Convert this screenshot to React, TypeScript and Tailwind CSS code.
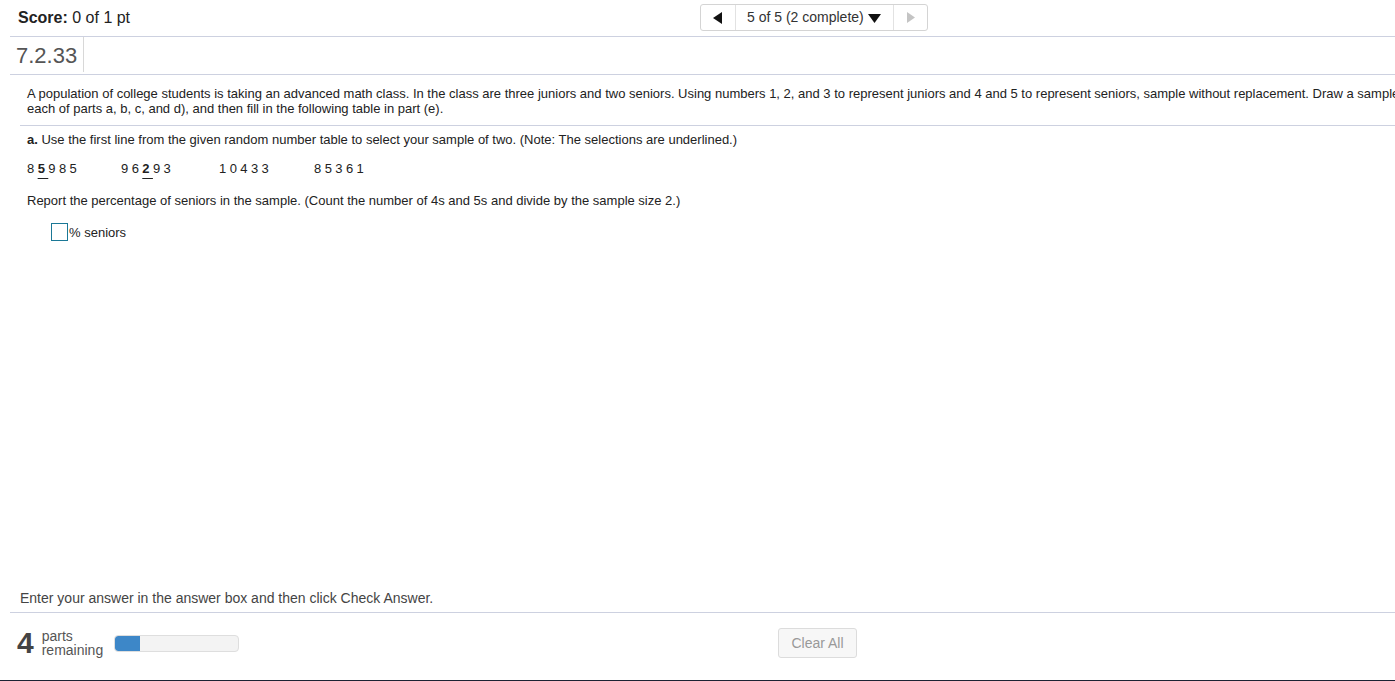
import React from "react";

const groups = [
  { digits: ["8", "5", "9", "8", "5"], pick: 1, width: "w-[94px]" },
  { digits: ["9", "6", "2", "9", "3"], pick: 2, width: "w-[98px]" },
  { digits: ["1", "0", "4", "3", "3"], pick: -1, width: "w-[95px]" },
  { digits: ["8", "5", "3", "6", "1"], pick: -1, width: "w-[95px]" },
];

export default function App() {
  return (
    <div className="h-[681px] w-[1395px] overflow-hidden bg-white flex flex-col font-['Liberation_Sans',Arial,sans-serif] text-[#222]">
      {/* Barra superior */}
      <div className="h-[36px] flex items-center">
        <div className="w-[700px] pl-[18px] text-[16px] text-[#222]">
          <span className="font-bold">Score:</span> 0 of 1 pt
        </div>
        <div className="flex h-[27px] mt-[-1px] border border-[#d4d4d4] rounded-[3px] bg-white">
          <button className="w-[35px] flex items-center justify-center border-r border-[#e2e2e2]">
            <svg width="10" height="12" viewBox="0 0 10 12">
              <path d="M9 0 L9 12 L0 6 Z" fill="#111" />
            </svg>
          </button>
          <button className="w-[158px] flex items-center pl-[11px] text-[14px] text-[#333] border-r border-[#e2e2e2]">
            5 of 5 (2 complete)
            <svg width="13" height="9" viewBox="0 0 13 9" className="ml-[4px] mt-[1px]">
              <path d="M0 0 L13 0 L6.5 9 Z" fill="#111" />
            </svg>
          </button>
          <button className="w-[33px] flex items-center justify-center">
            <svg width="8" height="11" viewBox="0 0 8 11">
              <path d="M0 0 L8 5.5 L0 11 Z" fill="#c4c4c4" />
            </svg>
          </button>
        </div>
      </div>
      <div className="ml-[10px] border-t border-[#cdd1e0]" />

      {/* Número del ejercicio */}
      <div className="ml-[10px] h-[37px] flex">
        <div className="px-[6px] pt-[4px] text-[22px] leading-[30px] text-[#555] border-r border-[#d8d8d8] h-[35px]">
          7.2.33
        </div>
      </div>
      <div className="ml-[10px] border-t border-[#cdd1e0]" />

      {/* Enunciado (cortado a la derecha como en la vista original) */}
      <div className="ml-[20px] pl-[7px] pt-[11px] pb-[9px] text-[13px] leading-[15px] text-[#222] whitespace-nowrap">
        <div>
          A population of college students is taking an advanced math class. In the class are three juniors and two seniors. Using numbers 1, 2, and 3 to represent juniors and 4 and 5 to represent seniors, sample without replacement. Draw a sample of two (for
        </div>
        <div>each of parts a, b, c, and d), and then fill in the following table in part (e).</div>
      </div>
      <div className="ml-[20px] border-t border-[#cdd1e0]" />

      <div className="pl-[27px] text-[13px] leading-[15px] text-[#222]">
        <div className="mt-[6px]">
          <span className="font-bold">a.</span> Use the first line from the given random number table to select your sample of two. (Note: The selections are underlined.)
        </div>

        <div className="mt-[14px] flex">
          {groups.map((g, gi) => (
            <div key={gi} className={`${g.width} tracking-[3.4px]`}>
              {g.digits.map((d, i) =>
                i === g.pick ? (
                  <span key={i} className="font-bold underline decoration-[1px] underline-offset-[5px]">
                    {d}
                  </span>
                ) : (
                  <span key={i}>{d}</span>
                )
              )}
            </div>
          ))}
        </div>

        <div className="mt-[17px]">
          Report the percentage of seniors in the sample. (Count the number of 4s and 5s and divide by the sample size 2.)
        </div>

        <div className="mt-[15px] ml-[24px] flex items-center">
          <div className="w-[17px] h-[18px] border border-[#1b7896] bg-white" />
          <span className="ml-[1px]">% seniors</span>
        </div>
      </div>

      <div className="flex-1" />

      {/* Pie */}
      <div className="pl-[20px] text-[14px] text-[#444] leading-[16px] mb-[6px]">
        Enter your answer in the answer box and then click Check Answer.
      </div>
      <div className="ml-[10px] border-t border-[#cdd1e0]" />

      <div className="h-[67px] flex items-start pt-[15px]">
        <div className="w-[700px] flex items-center pl-[17px]">
          <span className="text-[30px] font-bold text-[#444] leading-[30px]">4</span>
          <div className="ml-[8px] text-[14px] leading-[14px] text-[#555]">
            <div>parts</div>
            <div>remaining</div>
          </div>
          <div className="ml-[11px] w-[125px] h-[17px] rounded-[4px] bg-[#f3f3f3] border border-[#dedede] overflow-hidden">
            <div className="w-[25px] h-full bg-[#3d87c8] rounded-l-[3px]" />
          </div>
        </div>
        <button className="ml-[78px] w-[79px] h-[30px] rounded-[3px] bg-[#f7f7f7] border border-[#dcdcdc] text-[14px] text-[#999]">
          Clear All
        </button>
      </div>
      <div className="h-[1px] bg-[#1c2233]" />
    </div>
  );
}
